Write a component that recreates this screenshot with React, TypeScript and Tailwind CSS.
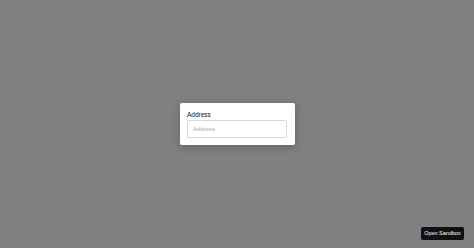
export default function App() {
  return (
    <div className="relative w-[474px] h-[248px] bg-[#808080] overflow-hidden font-['Liberation_Sans',Arial,sans-serif]">
      <div className="flex h-full items-center justify-center">
        <div className="w-[115px] h-[42px] bg-white rounded-[2px] shadow-[0_2px_8px_rgba(0,0,0,0.25)] px-[7px] pt-[8px] ml-[1px]">
          <label className="block text-[6.5px] leading-[8px] text-[#111]">Address</label>
          <div className="mt-[1px] w-[100px] h-[18px] border border-[#d9d9d9] rounded-[2px] flex items-center px-[5px]">
            <span className="text-[6px] text-[#aaa]">Address</span>
          </div>
        </div>
      </div>
      <button className="absolute left-[421px] top-[227px] w-[43px] h-[13px] bg-[#111] rounded-[2px] text-white text-[5.5px] leading-[13px] text-center">
        Open Sandbox
      </button>
    </div>
  )
}
